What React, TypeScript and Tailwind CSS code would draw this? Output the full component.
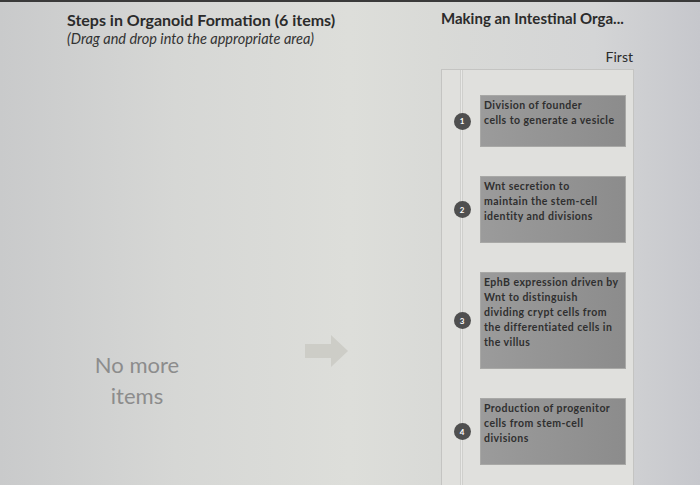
import React from "react";

const steps = [
  { n: 1, lines: ["Division of founder", "cells to generate a vesicle"], h: "h-[50px]" },
  { n: 2, lines: ["Wnt secretion to", "maintain the stem-cell", "identity and divisions"], h: "h-[65px]" },
  {
    n: 3,
    lines: ["EphB expression driven by", "Wnt to distinguish", "dividing crypt cells from", "the differentiated cells in", "the villus"],
    h: "h-[95px]",
  },
  { n: 4, lines: ["Production of progenitor", "cells from stem-cell", "divisions"], h: "h-[65px]" },
];

const App = () => {
  return (
    <div
      className="relative flex h-[485px] w-[700px] overflow-hidden bg-[linear-gradient(90deg,#c9cacb_0%,#d6d7d5_25%,#dddeda_50%,#d9dad7_62%,#d4d5d6_85%,#c6c7cc_100%)] text-[#2d2d2d]"
      style={{ fontFamily: "Lato, 'Open Sans', sans-serif" }}
    >
      <div className="absolute left-0 right-0 top-0 h-[2px] bg-[#3a3a3a]" />
      <div className="flex w-[441px] flex-col pl-[67px] pt-[10px]">
        <h1 className="text-[16px] font-bold leading-[20px] text-[#2b2b2b]">
          Steps in Organoid Formation (6 items)
        </h1>
        <p className="text-[14.5px] italic leading-[18px] text-[#333]">
          (Drag and drop into the appropriate area)
        </p>
        <div className="flex flex-1 items-start pt-[301px]">
          <div className="w-[140px] text-center text-[22px] leading-[31px] text-[#8c8c8c]">
            No more
            <br />
            items
          </div>
          <svg width="44" height="32" viewBox="0 0 44 32" className="ml-[98px] mt-[-14px]">
            <rect x="0" y="9" width="27" height="14" fill="#cdcdc7" />
            <polygon points="26,0 43,16 26,32" fill="#cdcdc7" />
          </svg>
        </div>
      </div>
      <div className="flex w-[193px] flex-col pt-[9px]">
        <h2 className="text-[15px] font-bold leading-[19px] text-[#2b2b2b]">Making an Intestinal Orga...</h2>
        <div className="mt-[20px] pr-[1px] text-right text-[14px] leading-[18px] text-[#2b2b2b]">First</div>
        <div className="relative mt-[3px] flex flex-1 flex-col gap-[31px] border border-b-0 border-[#c4c4c2] bg-[#e0e0dd] pt-[26px]">
          <div className="absolute bottom-0 top-0 left-[18px] w-[3px] border-x border-[#cfcfcc] bg-[#e8e8e6]" />
          {steps.map((s) => (
            <div key={s.n} className="relative flex items-center">
              <div className="flex w-[39px] justify-center pl-[1px]">
                <span className="flex h-[17px] w-[17px] items-center justify-center rounded-full bg-[#4f4f4f] text-[8px] font-bold text-white">
                  {s.n}
                </span>
              </div>
              <div
                className={`${s.h} w-[144px] bg-[linear-gradient(90deg,#9b9b9b,#8c8c8c)] px-[3px] pt-[2px] text-[10.5px] font-bold leading-[15px] tracking-[0.45px] whitespace-nowrap text-[#2f2f2f] shadow-[0_0_0_1px_#a8a8a6]`}
              >
                {s.lines.map((l) => (
                  <div key={l}>{l}</div>
                ))}
              </div>
            </div>
          ))}
        </div>
      </div>
    </div>
  );
};

export default App;
